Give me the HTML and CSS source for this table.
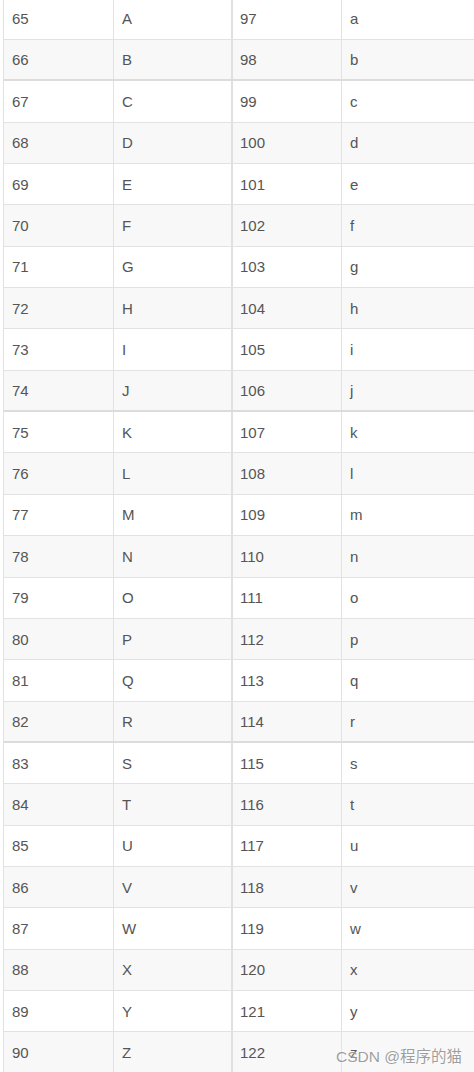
FILE: index.html
```html
<!DOCTYPE html>
<html lang="zh">
<head>
<meta charset="utf-8">
<title>ASCII</title>
<link rel="stylesheet" href="styles.css">
</head>
<body>
<div class="page">
  <div class="table" id="t"></div>
  <div class="watermark">CSDN @程序的猫</div>
</div>
<script>
  var t = document.getElementById('t');
  var html = '';
  for (var i = 0; i < 26; i++) {
    var cls = 'row' + (i % 2 === 1 ? ' stripe' : '') + (i % 8 === 1 ? ' seg' : '');
    html += '<div class="' + cls + '">' +
      '<div class="cell c1">' + (65 + i) + '</div>' +
      '<div class="cell c2">' + String.fromCharCode(65 + i) + '</div>' +
      '<div class="cell c3">' + (97 + i) + '</div>' +
      '<div class="cell c4">' + String.fromCharCode(97 + i) + '</div>' +
      '</div>';
  }
  t.innerHTML = html;
</script>
</body>
</html>
```
FILE: styles.css
```css
html, body {
  margin: 0;
  padding: 0;
  background: #fff;
}
.page {
  position: relative;
  width: 474px;
  height: 1072px;
  overflow: hidden;
  font-family: "Liberation Sans", Arial, sans-serif;
  font-size: 15px;
  color: #555;
}
.table {
  margin-top: -1.5px;
  margin-left: 3px;
  display: flex;
  flex-direction: column;
}
.row {
  display: grid;
  grid-template-columns: 110px 118px 110px 1fr;
  height: 41.36px;
  box-sizing: border-box;
  border-bottom: 1px solid #e2e2e2;
}
.row.seg {
  border-bottom: 2px solid #dcdcdc;
}
.row.stripe {
  background: #f8f8f8;
}
.cell {
  display: flex;
  align-items: center;
  padding-left: 8px;
  border-left: 1px solid #e2e2e2;
}
.c3 {
  border-left: 2px solid #e0e0e0;
  padding-left: 7px;
}
.watermark {
  position: absolute;
  right: 12px;
  bottom: 6px;
  font-family: "Liberation Sans", "Noto Sans CJK SC", sans-serif;
  font-size: 15.5px;
  color: rgba(140, 140, 140, 0.85);
  text-shadow: 0 0 2px #fff;
}
```
